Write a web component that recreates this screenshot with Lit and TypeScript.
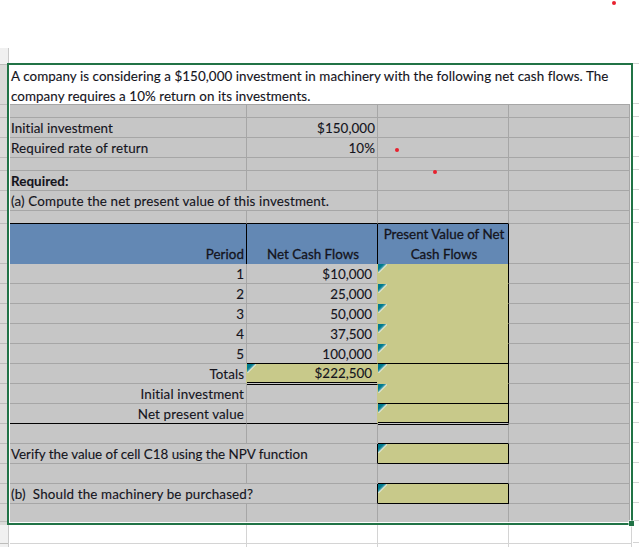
import { LitElement, html, css } from "lit";
import { customElement } from "lit/decorators.js";

const RAIL = [40, 13, 20, 20, 13, 20, 20, 13, 40, ...Array(12).fill(20), 18];

@customElement("app-root")
export class AppRoot extends LitElement {
  static styles = css`
    :host { display: block; width: 639px; height: 547px; background: #fff; overflow: hidden; position: relative;
      font-family: Lato, "Liberation Sans", sans-serif; font-size: 13.4px; letter-spacing: 0.06px; color: #14141c;
      -webkit-text-stroke: 0.12px #14141c; }
    * { box-sizing: border-box; }
    .page { display: flex; padding-top: 48px; height: 547px; }
    .rail { display: flex; flex-direction: column; flex: none; }
    .rail.gutter { width: 9px; background: #f0f0f0; border-right: 1px solid #c9c9c9; }
    .rail.side { width: 6px; }
    .tick { flex: none; border-bottom: 1px solid #d4d4d4; }
    .gutter .tick { border-bottom-color: #bdbdbb; }
    .gutter .tick.on { background: #dadad8; }
    .gutter .tick.noline { border-bottom: none; }
    .side .tick.noline { border-bottom: none; }
    .center { width: 624px; flex: none; display: flex; flex-direction: column; }
    .spacer { height: 15px; flex: none; }
    .sel { position: relative; margin-left: -2px; width: 626px; border: 2px solid #217346;
      padding: 0 1px 1px 1px; background: #fff; }
    .handle { position: absolute; right: -3px; bottom: -3px; width: 5px; height: 5px; background: #217346; box-shadow: 0 0 0 0.5px #fff; }
    .grid { display: grid; grid-template-columns: 237px 131px 131px 121px;
      grid-template-rows: 40px 13px 20px 20px 13px 20px 20px 13px 40px repeat(12, 20px) 18px;
      background: #c6c6c6; }
    .c { position: relative; border-right: 1px solid #a6a6a6; border-bottom: 1px solid #a6a6a6; padding: 1px 2px 0 1px;
      white-space: nowrap; line-height: 19px; }
    .s2 { grid-column: span 2; }
    .s4 { grid-column: span 4; }
    .r { text-align: right; }
    .m { text-align: center; letter-spacing: 0; padding-left: 3px; padding-right: 1px; }
    .num { padding-right: 5px; letter-spacing: 0; }
    .wide { letter-spacing: 0.15px; }
    .tight { letter-spacing: -0.02px; }
    .intro { background: #fff; padding: 1px 2px 0 1px; line-height: 20px; border-right: none; }
    .b { font-weight: 700; }
    .blue { background: #6388b4; border-right-color: #000; border-bottom: none; display: flex; flex-direction: column; justify-content: flex-end; line-height: 20px; -webkit-text-stroke: 0.3px #14141c; }
    .bk { border-bottom-color: #000; }
    .ol { background: #c8c98a; border-right-color: #000; border-bottom-color: #c8c98a; }
    .ol.bk { border-bottom-color: #000; }
    .ro { border-right-color: #c8c98a; }
    .rk { border-right-color: #000; }
    .tk { border-top: 1px solid #000; }
    .dbl { border-bottom-color: #c6c6c6; box-shadow: inset 0 -1px 0 #000; }
    .nb { border-bottom: none; }
    .tri::before { content: ""; position: absolute; left: 0; top: 0; width: 9px; height: 9px;
      background: linear-gradient(135deg, #007a8e 0 30%, #3d9aa6 42%, #e8ecdc 52%, transparent 60%); }
    .totalv { line-height: 17px; }
    .below { display: grid; padding-left: 1px; grid-template-columns: 237px 131px 131px 123px; grid-template-rows: 19px 3px; flex: none; }
    .below div { border-right: 1px solid #d4d4d4; }
    .below .l { border-bottom: 1px solid #d4d4d4; }
    .dot { position: absolute; width: 4px; height: 4px; border-radius: 50%; background: #e8202e; }
    .d1 { left: 612px; top: 1px; }
    .d2 { left: 395px; top: 148px; }
    .d3 { left: 433px; top: 170px; }
  `;

  rail(first: number, last: number[]) {
    const rows = [first, ...RAIL];
    return html`${rows.map((h, i) => html`<div class="tick ${i > 0 ? "on" : ""}" style="height:${h}px"></div>`)}${last.map(
      (h, i) => html`<div class="tick ${i === 0 ? "on noline" : i === 2 ? "noline" : ""}" style="height:${h}px"></div>`
    )}`;
  }

  render() {
    const flows = ["$10,000", "25,000", "50,000", "37,500", "100,000"];
    return html`
      <div class="page">
        <div class="rail gutter">${this.rail(17, [3, 19, 3])}</div>
        <div class="center">
          <div class="spacer"></div>
          <div class="sel">
            <div class="grid">
              <div class="c s4 intro">A company is considering a $150,000 investment in machinery with the following net cash flows. The<br />company requires a 10% return on its investments.</div>

              <div class="c"></div><div class="c"></div><div class="c"></div><div class="c"></div>

              <div class="c">Initial investment</div><div class="c r">$150,000</div><div class="c"></div><div class="c"></div>
              <div class="c wide">Required rate of return</div><div class="c r">10%</div><div class="c"></div><div class="c"></div>

              <div class="c"></div><div class="c"></div><div class="c"></div><div class="c"></div>

              <div class="c b">Required:</div><div class="c"></div><div class="c"></div><div class="c"></div>
              <div class="c s2 wide">(a) Compute the net present value of this investment.</div><div class="c"></div><div class="c"></div>

              <div class="c bk"></div><div class="c bk"></div><div class="c bk"></div><div class="c"></div>

              <div class="c blue r rk"><span>Period</span></div>
              <div class="c blue m rk"><span>Net Cash Flows</span></div>
              <div class="c blue m rk"><span>Present Value of Net</span><span>Cash Flows</span></div>
              <div class="c"></div>

              ${flows.map(
                (v, i) => html`
                  <div class="c r">${i + 1}</div>
                  <div class="c r num ro ${i === 4 ? "bk" : ""}">${v}</div>
                  <div class="c ol tri ${i === 4 ? "bk" : ""}"></div>
                  <div class="c"></div>
                `
              )}

              <div class="c r ro">Totals</div>
              <div class="c ol ro tri r num totalv dbl">$222,500</div>
              <div class="c ol tri"></div>
              <div class="c"></div>

              <div class="c r wide">Initial investment</div>
              <div class="c ro tk"></div>
              <div class="c ol tri bk"></div>
              <div class="c"></div>

              <div class="c r bk wide">Net present value</div>
              <div class="c ro bk"></div>
              <div class="c ol tri dbl"></div>
              <div class="c"></div>

              <div class="c"></div>
              <div class="c"></div>
              <div class="c tk bk"></div>
              <div class="c"></div>

              <div class="c s2 rk tight">Verify the value of cell C18 using the NPV function</div>
              <div class="c ol tri bk"></div>
              <div class="c"></div>

              <div class="c"></div>
              <div class="c"></div>
              <div class="c bk"></div>
              <div class="c"></div>

              <div class="c s2 rk wide">(b)&nbsp; Should the machinery be purchased?</div>
              <div class="c ol tri bk"></div>
              <div class="c"></div>

              <div class="c nb"></div>
              <div class="c nb"></div>
              <div class="c nb"></div>
              <div class="c nb"></div>
            </div>
            <div class="handle"></div>
          </div>
          <div class="below">
            <div class="l"></div><div class="l"></div><div class="l"></div><div class="l"></div>
            <div></div><div></div><div></div><div></div>
          </div>
        </div>
        <div class="rail side">${this.rail(16, [3, 19, 3])}</div>
      </div>
      <span class="dot d1"></span><span class="dot d2"></span><span class="dot d3"></span>
    `;
  }
}
